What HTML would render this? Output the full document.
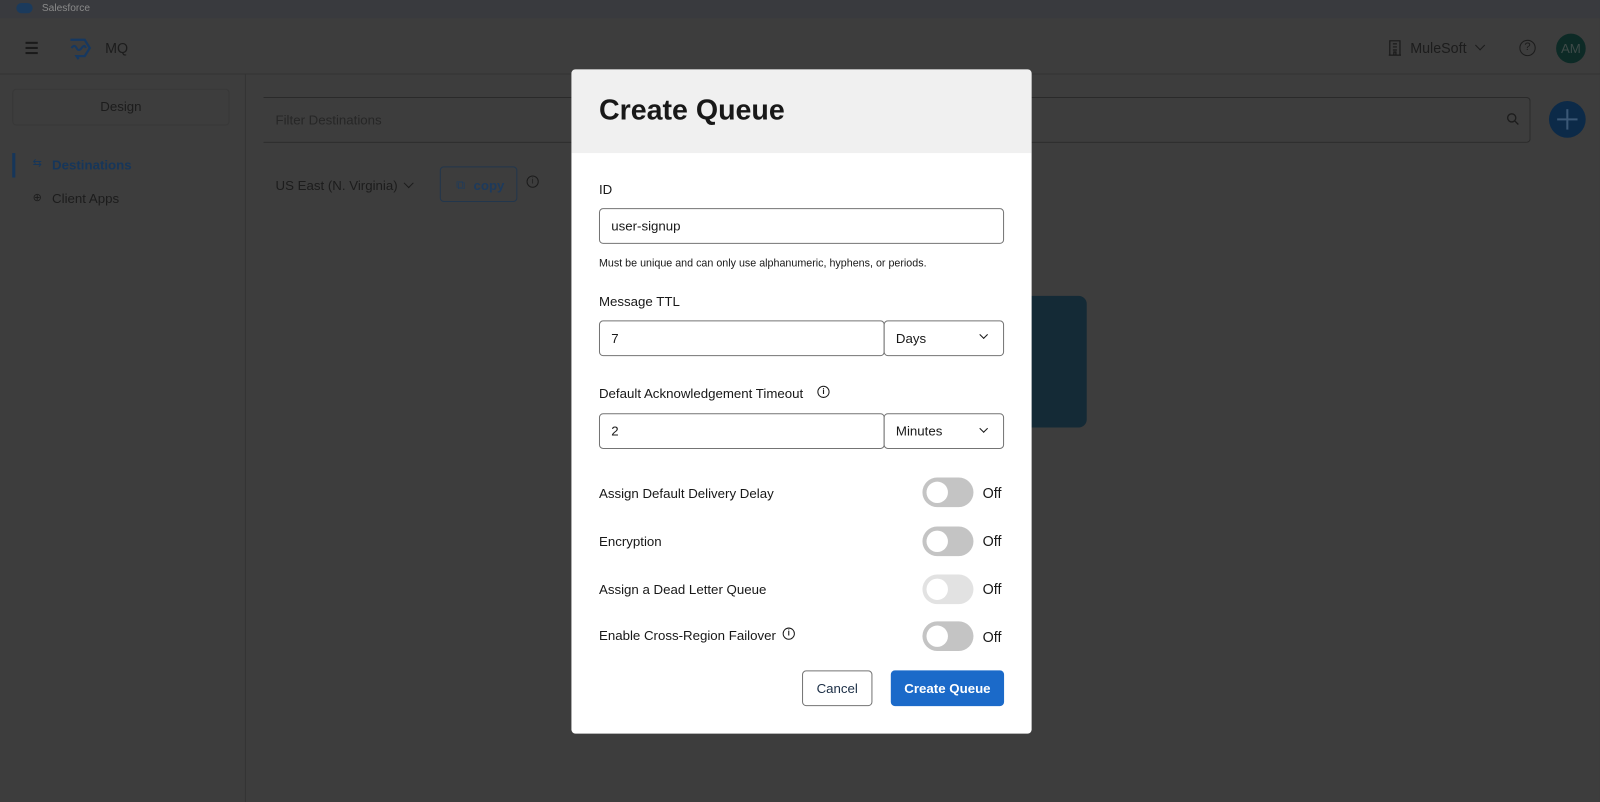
<!DOCTYPE html>
<html><head><meta charset="utf-8"><style>
*{box-sizing:border-box;margin:0;padding:0}
html,body{width:1600px;height:802px;overflow:hidden;background:#3d3d3d;font-family:"Liberation Sans",Arial,sans-serif}
#w{position:absolute;left:0;top:0;width:1568px;height:786px;transform:scale(1.0204);transform-origin:0 0;background:#3d3d3d}
.a{position:absolute}
.t{position:absolute;white-space:nowrap;line-height:1}
.lbl{font-size:13px;color:#181818}
.inp{position:absolute;border:1px solid #747474;border-radius:4px;background:#fff;font-size:13px;color:#181818;padding-left:11px;display:flex;align-items:center}
.tg{position:absolute;left:904px;width:50px;height:29px;border-radius:15px;background:#c4c4c4}
.tg::after{content:"";position:absolute;left:4px;top:4px;width:21px;height:21px;border-radius:50%;background:#fff}
.off{position:absolute;left:963px;font-size:14px;color:#181818;line-height:1}
.chev{position:absolute;width:7px;height:7px;border-right:1.5px solid #181818;border-bottom:1.5px solid #181818;transform:rotate(45deg)}
</style></head><body><div id="w">
<!-- top bar -->
<div class="a" style="left:0;top:0;width:1568px;height:18px;background:#393a3e"></div>
<div class="a" style="left:16px;top:3px;width:16px;height:10px;border-radius:5px;background:#1b3a5c"></div>
<div class="t" style="left:41px;top:4px;font-size:10px;color:#8a8a8a">Salesforce</div>
<!-- header -->
<div class="a" style="left:0;top:72px;width:1568px;height:1px;background:#333"></div>
<div class="a" style="left:25px;top:41px;width:12px;height:1.5px;background:#1a1a1a;box-shadow:0 5px 0 #1a1a1a,0 10px 0 #1a1a1a"></div>
<svg class="a" style="left:67px;top:36px" width="24" height="24" viewBox="0 0 24 24"><path d="M2 3h14l5 8-5 8H8l2 3" fill="none" stroke="#163860" stroke-width="2.2"/><path d="M3 11q3-4 5 0t5 0 4 0" fill="none" stroke="#163860" stroke-width="2"/></svg>
<div class="t" style="left:103px;top:40px;font-size:14px;color:#1c1c1c">MQ</div>
<svg class="a" style="left:1360px;top:39px" width="14" height="16" viewBox="0 0 14 16"><path d="M2 15V1h10v14M1 15h12M5 4h4M5 7h4M5 10h4M6 15v-3h2v3" fill="none" stroke="#1a1a1a" stroke-width="1.2"/></svg>
<div class="t" style="left:1382px;top:40px;font-size:14px;color:#1c1c1c">MuleSoft</div>
<div class="chev" style="left:1447px;top:41px;border-color:#1c1c1c"></div>
<div class="a" style="left:1489px;top:39px;width:16px;height:16px;border:1.5px solid #1c1c1c;border-radius:50%;font-size:11px;color:#1c1c1c;text-align:center;line-height:13px">?</div>
<div class="a" style="left:1525px;top:33px;width:29px;height:29px;border-radius:50%;background:#0d2a26;color:#3e4a48;font-size:13px;text-align:center;line-height:29px">AM</div>
<!-- sidebar -->
<div class="a" style="left:240px;top:73px;width:1px;height:713px;background:#333"></div>
<div class="a" style="left:12px;top:87px;width:213px;height:36px;border:1px solid #383838;border-radius:4px;font-size:13px;color:#1c1c1c;text-align:center;line-height:34px">Design</div>
<div class="a" style="left:12px;top:150px;width:3px;height:24px;background:#16365a"></div>
<div class="t" style="left:32px;top:155px;font-size:11px;color:#16365a">⇆</div>
<div class="t" style="left:51px;top:155px;font-size:13px;color:#16365a;font-weight:bold">Destinations</div>
<div class="t" style="left:32px;top:189px;font-size:11px;color:#1c1c1c">⊕</div>
<div class="t" style="left:51px;top:188px;font-size:13px;color:#1c1c1c">Client Apps</div>
<!-- main -->
<div class="a" style="left:258px;top:95px;width:1242px;height:45px;border:1px solid #2a2a2a;border-left:none;border-radius:0 4px 4px 0"></div>
<div class="t" style="left:270px;top:111px;font-size:13px;color:#262626">Filter Destinations</div>
<svg class="a" style="left:1476px;top:110px" width="13" height="13" viewBox="0 0 13 13"><circle cx="5.5" cy="5.5" r="4" fill="none" stroke="#1c1c1c" stroke-width="1.3"/><path d="M8.5 8.5l3.5 3.5" stroke="#1c1c1c" stroke-width="1.3"/></svg>
<div class="a" style="left:1518px;top:99px;width:36px;height:36px;border-radius:50%;background:#0c2a48"></div>
<div class="a" style="left:1526px;top:116px;width:20px;height:2px;background:#3b5876"></div>
<div class="a" style="left:1535px;top:107px;width:2px;height:20px;background:#3b5876"></div>
<div class="t" style="left:270px;top:175px;font-size:13px;color:#1c1c1c">US East (N. Virginia)</div>
<div class="chev" style="left:397px;top:176px;border-color:#1c1c1c"></div>
<div class="a" style="left:431px;top:163px;width:76px;height:35px;border:1px solid #22364c;border-radius:4px"></div>
<div class="t" style="left:447px;top:175px;font-size:12px;color:#1d3a5c">⧉</div>
<div class="t" style="left:464px;top:175px;font-size:13px;color:#1d3a5c;font-weight:bold">copy</div>
<div class="a" style="left:516px;top:172px;width:12px;height:12px;border:1.2px solid #1c1c1c;border-radius:50%;font-size:8px;text-align:center;line-height:10px;color:#1c1c1c">i</div>
<div class="a" style="left:995px;top:290px;width:70px;height:129px;border-radius:8px;background:#142a36"></div>
<!-- modal -->
<div class="a" style="left:560px;top:68px;width:451px;height:651px;background:#fff;border-radius:4px;overflow:hidden">
<div class="a" style="left:0;top:0;width:451px;height:82px;background:#f0f0f0"></div>
</div>
<div class="t" style="left:587px;top:94px;font-size:28px;font-weight:bold;color:#181818">Create Queue</div>
<div class="t lbl" style="left:587px;top:179px">ID</div>
<div class="inp" style="left:587px;top:204px;width:397px;height:35px">user-signup</div>
<div class="t" style="left:587px;top:253px;font-size:10.5px;color:#181818">Must be unique and can only use alphanumeric, hyphens, or periods.</div>
<div class="t lbl" style="left:587px;top:289px">Message TTL</div>
<div class="inp" style="left:587px;top:314px;width:280px;height:35px">7</div>
<div class="inp" style="left:866px;top:314px;width:118px;height:35px">Days</div>
<div class="chev" style="left:961px;top:325px;width:6px;height:6px"></div>
<div class="t lbl" style="left:587px;top:379px">Default Acknowledgement Timeout</div>
<div class="a" style="left:801px;top:378px;width:12px;height:12px;border:1.2px solid #181818;border-radius:50%;font-size:8px;text-align:center;line-height:10px;color:#181818;font-weight:bold">i</div>
<div class="inp" style="left:587px;top:405px;width:280px;height:35px">2</div>
<div class="inp" style="left:866px;top:405px;width:118px;height:35px">Minutes</div>
<div class="chev" style="left:961px;top:417px;width:6px;height:6px"></div>
<div class="t lbl" style="left:587px;top:477px">Assign Default Delivery Delay</div>
<div class="tg" style="top:468px"></div><div class="off" style="top:476px">Off</div>
<div class="t lbl" style="left:587px;top:524px">Encryption</div>
<div class="tg" style="top:516px"></div><div class="off" style="top:523px">Off</div>
<div class="t lbl" style="left:587px;top:571px">Assign a Dead Letter Queue</div>
<div class="tg" style="top:563px;background:#e2e2e2"></div><div class="off" style="top:570px">Off</div>
<div class="t lbl" style="left:587px;top:616px">Enable Cross-Region Failover</div>
<div class="a" style="left:767px;top:615px;width:12px;height:12px;border:1.2px solid #181818;border-radius:50%;font-size:8px;text-align:center;line-height:10px;color:#181818;font-weight:bold">i</div>
<div class="tg" style="top:609px"></div><div class="off" style="top:617px">Off</div>
<div class="a" style="left:786px;top:657px;width:69px;height:35px;border:1px solid #747474;border-radius:4px;font-size:13px;color:#1b2e45;text-align:center;line-height:33px">Cancel</div>
<div class="a" style="left:873px;top:657px;width:111px;height:35px;background:#1b6ac9;border-radius:4px;font-size:13px;color:#fff;font-weight:bold;text-align:center;line-height:35px">Create Queue</div>
</div></body></html>
